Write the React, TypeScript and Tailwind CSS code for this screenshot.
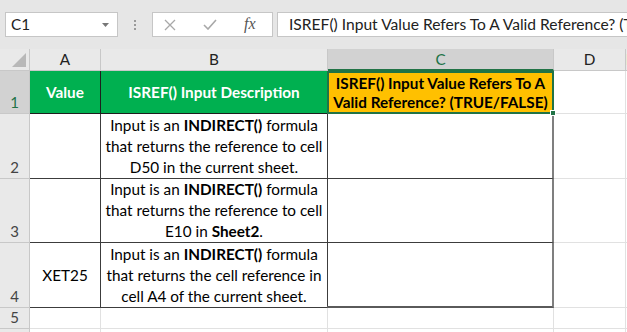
import React from 'react';

const font = { fontFamily: 'Lato, "Open Sans", sans-serif' };

const RowHead: React.FC<{ n: number; h: string; active?: boolean }> = ({ n, h, active }) => (
  <div
    className={`${h} flex items-end justify-center pb-[1px] border-r border-b border-[#c8c8c8] text-[15px] leading-[20px] ${
      active ? 'bg-[#d2d2d2] text-[#217346]' : 'bg-[#e9e9e9] text-[#444]'
    }`}
  >
    {n}
  </div>
);

const Desc: React.FC<{ children: React.ReactNode }> = ({ children }) => (
  <div className="flex items-center justify-center text-center text-[15.3px] leading-[21px] text-black px-1 border-r border-b border-[#3c3c3c] overflow-hidden">
    <p>{children}</p>
  </div>
);

export default function App() {
  return (
    <div className="w-[627px] h-[332px] overflow-hidden bg-white" style={font}>
      {/* formula bar */}
      <div className="h-[49px] bg-[#e6e6e6] flex items-start pt-[12px] pl-[5px]">
        <div className="w-[113px] h-[25px] bg-white border border-[#c6c6c6] flex items-center justify-between pl-[5px] pr-[8px]">
          <span className="text-[15.3px] text-[#222]">C1</span>
          <svg width="7" height="4" viewBox="0 0 7 4">
            <path d="M0 0h7L3.5 4z" fill="#777" />
          </svg>
        </div>
        <div className="w-[34px] h-[25px] flex flex-col items-center justify-center gap-[2px]">
          <span className="w-[2px] h-[2px] bg-[#9a9a9a]" />
          <span className="w-[2px] h-[2px] bg-[#9a9a9a]" />
          <span className="w-[2px] h-[2px] bg-[#9a9a9a]" />
        </div>
        <div className="w-[121px] h-[25px] bg-white border border-[#c6c6c6] flex items-center pl-[11px] gap-[27px]">
          <svg width="12" height="12" viewBox="0 0 12 12">
            <path d="M1 1l10 10M11 1L1 11" stroke="#a8a8a8" strokeWidth="1.3" />
          </svg>
          <svg width="14" height="11" viewBox="0 0 14 11">
            <path d="M1 6l4 4 8-9" stroke="#a8a8a8" strokeWidth="1.6" fill="none" />
          </svg>
          <span className="text-[16px] italic text-[#555] -mt-[2px]" style={{ fontFamily: '"Liberation Serif", serif' }}>
            fx
          </span>
        </div>
        <div className="ml-[4px] flex-1 h-[25px] bg-white border-l border-y border-[#c6c6c6] flex items-center pl-[11px] whitespace-nowrap overflow-hidden">
          <span className="text-[15.6px] text-[#222]">ISREF() Input Value Refers To A Valid Reference? (TRUE/FALSE)</span>
        </div>
      </div>

      {/* sheet grid */}
      <div className="grid grid-cols-[30px_71px_227px_226px_72px_1fr] grid-rows-[22px_43px_65px_64px_65px_21px_21px]">
        {/* column headers */}
        <div className="bg-[#e9e9e9] border-r border-b border-[#c8c8c8] flex items-end justify-end p-[3px]">
          <svg width="14" height="14" viewBox="0 0 14 14">
            <path d="M14 0v14H0z" fill="#b8b8b8" />
          </svg>
        </div>
        {['A', 'B', 'C', 'D', 'E'].map((c) => (
          <div
            key={c}
            className={`flex items-center justify-center text-[15.3px] border-r border-b border-[#c8c8c8] ${
              c === 'C' ? 'bg-[#d2d2d2] text-[#217346] border-b-[#217346] border-b-2' : 'bg-[#e9e9e9] text-[#222]'
            }`}
          >
            {c}
          </div>
        ))}

        {/* row 1 */}
        <RowHead n={1} h="h-[43px]" active />
        <div className="bg-[#00b050] text-white font-bold text-[15.3px] flex items-center justify-center border-r border-b border-[#1e1e1e]">
          Value
        </div>
        <div className="bg-[#00b050] text-white font-bold text-[15.3px] flex items-center justify-center border-r border-b border-[#1e1e1e]">
          ISREF() Input Description
        </div>
        <div className="relative bg-[#ffc000] text-black font-bold text-[15.3px] leading-[19px] flex items-center justify-center text-center border-2 border-[#217346] -ml-[1px]">
          <p>
            ISREF() Input Value Refers To A
            <br />
            Valid Reference? (TRUE/FALSE)
          </p>
          <span className="absolute -right-[4px] -bottom-[4px] w-[6px] h-[6px] bg-[#217346] border border-white" />
        </div>
        <div className="border-r border-b border-[#e1e1e1]" />
        <div className="border-b border-[#e1e1e1]" />

        {/* row 2 */}
        <RowHead n={2} h="h-[65px]" />
        <div className="border-r border-b border-[#3c3c3c]" />
        <Desc>
          Input is an <b>INDIRECT()</b> formula that returns the reference to cell D50 in the current sheet.
        </Desc>
        <div className="border-r-2 border-b border-r-[#7f7f7f] border-b-[#3c3c3c] -ml-[1px]" />
        <div className="border-r border-b border-[#e1e1e1]" />
        <div className="border-b border-[#e1e1e1]" />

        {/* row 3 */}
        <RowHead n={3} h="h-[64px]" />
        <div className="border-r border-b border-[#3c3c3c]" />
        <Desc>
          Input is an <b>INDIRECT()</b> formula that returns the reference to cell E10 in <b>Sheet2</b>.
        </Desc>
        <div className="border-r-2 border-b border-r-[#7f7f7f] border-b-[#3c3c3c] -ml-[1px]" />
        <div className="border-r border-b border-[#e1e1e1]" />
        <div className="border-b border-[#e1e1e1]" />

        {/* row 4 */}
        <RowHead n={4} h="h-[65px]" />
        <div className="flex items-center justify-center text-[15.3px] border-r border-b border-[#3c3c3c]">XET25</div>
        <Desc>
          Input is an <b>INDIRECT()</b> formula that returns the cell reference in cell A4 of the current sheet.
        </Desc>
        <div className="border-r-2 border-b-2 border-r-[#7f7f7f] border-b-[#5a5a5a] -ml-[1px]" />
        <div className="border-r border-b border-[#e1e1e1]" />
        <div className="border-b border-[#e1e1e1]" />

        {/* row 5 */}
        <RowHead n={5} h="h-[21px]" />
        <div className="border-r border-b border-[#e1e1e1]" />
        <div className="border-r border-b border-[#e1e1e1]" />
        <div className="border-r border-b border-[#e1e1e1]" />
        <div className="border-r border-b border-[#e1e1e1]" />
        <div className="border-b border-[#e1e1e1]" />

        {/* row 6 */}
        <RowHead n={6} h="h-[21px]" />
        <div className="border-r border-[#e1e1e1]" />
        <div className="border-r border-[#e1e1e1]" />
        <div className="border-r border-[#e1e1e1]" />
        <div className="border-r border-[#e1e1e1]" />
        <div />
      </div>
    </div>
  );
}
